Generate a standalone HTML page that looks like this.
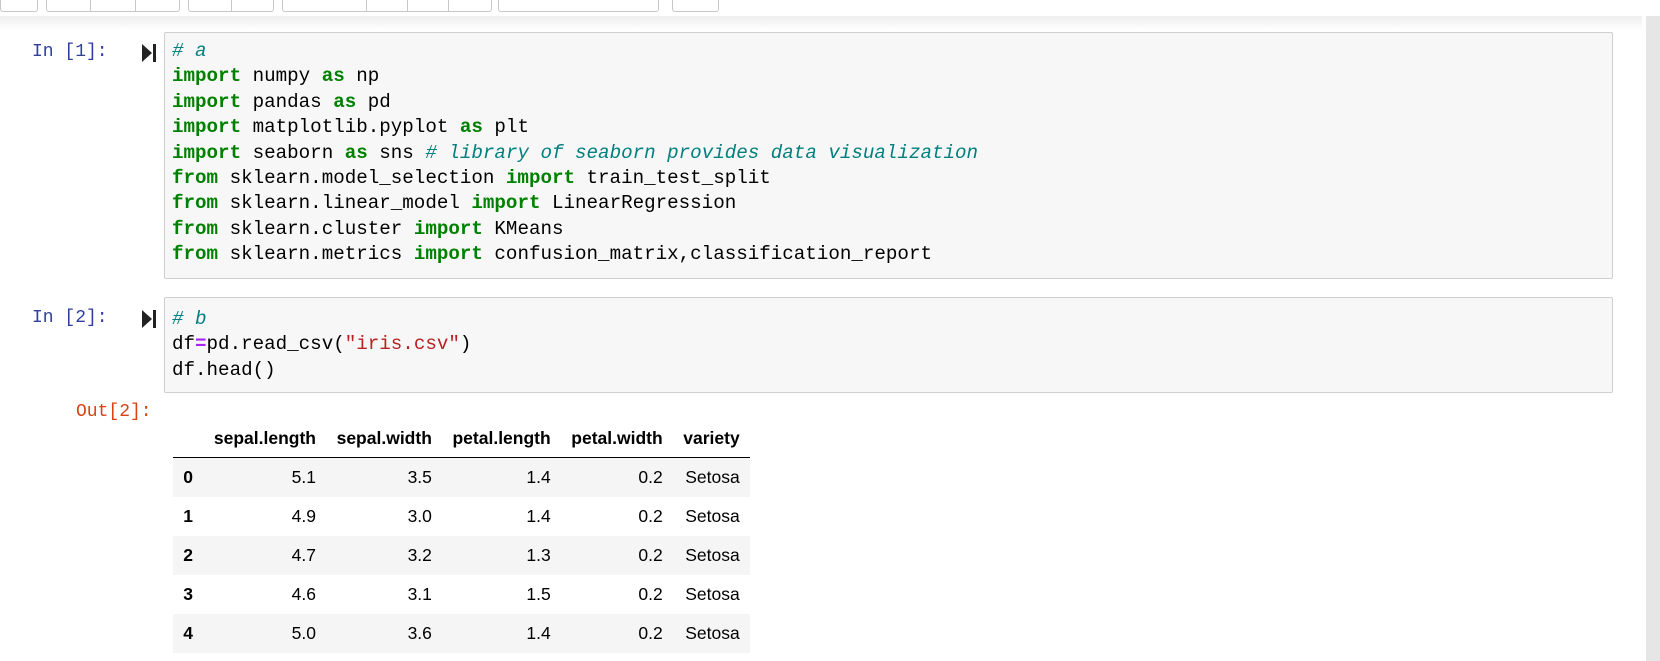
<!DOCTYPE html>
<html><head><style>
body{margin:0;width:1660px;height:661px;overflow:hidden;background:#fff;position:relative;font-family:"Liberation Sans",Arial,sans-serif}
.tb{position:absolute;top:-2px;height:14px;border:1px solid #c8c8c8;border-top:none;border-radius:0 0 3px 3px;background:#fff;box-sizing:border-box}
.dv{position:absolute;top:-2px;width:1px;height:13px;background:#c8c8c8}
.shadow{position:absolute;top:16px;left:0;width:1642px;height:14px;background:linear-gradient(#eee,#fff)}
.scroll{position:absolute;left:1646px;top:16px;width:14px;height:645px;background:#e6e6e6}
.cell{position:absolute;left:164px;width:1449px;background:#f7f7f7;border:1px solid #cfcfcf;border-radius:2px;box-sizing:border-box}
pre{margin:0;position:absolute;left:7px;font-family:"Liberation Mono",monospace;font-size:19.2px;line-height:25.4px;color:#000}
.k{color:#008000;font-weight:bold}.c{color:#007f7f;font-style:italic}.s{color:#ba2121}.o{color:#aa22ff;font-weight:bold}
.lbl{position:absolute;font-family:"Liberation Mono",monospace;font-size:18px;color:#303f9f}
.run{position:absolute;left:141px;width:17px;height:22px}
table{position:absolute;left:173px;top:420px;border-collapse:collapse;font-size:17.5px;color:#000}
th{font-weight:bold;text-align:right;padding:0 10.3px;height:37px}
td{text-align:right;padding:0 10.3px;height:39px}
thead th{border-bottom:1.5px solid #000}
tbody tr:nth-child(odd){background:#f5f5f5}
tbody th{text-align:left}
</style></head><body>
<div class="tb" style="left:0;width:38px"></div>
<div class="tb" style="left:46px;width:134px"></div><div class="dv" style="left:90px"></div><div class="dv" style="left:135px"></div>
<div class="tb" style="left:188px;width:86px"></div><div class="dv" style="left:231px"></div>
<div class="tb" style="left:282px;width:210px"></div><div class="dv" style="left:366px"></div><div class="dv" style="left:407px"></div><div class="dv" style="left:448px"></div>
<div class="tb" style="left:498px;width:161px"></div>
<div class="tb" style="left:672px;width:47px"></div>
<div class="shadow"></div>
<div class="scroll"></div>

<div class="lbl" style="left:32px;top:42px">In [1]:</div>
<svg class="run" style="top:42px" viewBox="0 0 17 22"><path d="M1 2L11 11L1 20Z" fill="#222"/><rect x="12" y="2" width="3" height="18" fill="#222"/></svg>
<div class="cell" style="top:32px;height:247px">
<pre style="top:6px"><span class="c"># a</span>
<span class="k">import</span> numpy <span class="k">as</span> np
<span class="k">import</span> pandas <span class="k">as</span> pd
<span class="k">import</span> matplotlib.pyplot <span class="k">as</span> plt
<span class="k">import</span> seaborn <span class="k">as</span> sns <span class="c"># library of seaborn provides data visualization</span>
<span class="k">from</span> sklearn.model_selection <span class="k">import</span> train_test_split
<span class="k">from</span> sklearn.linear_model <span class="k">import</span> LinearRegression
<span class="k">from</span> sklearn.cluster <span class="k">import</span> KMeans
<span class="k">from</span> sklearn.metrics <span class="k">import</span> confusion_matrix,classification_report</pre>
</div>

<div class="lbl" style="left:32px;top:308px">In [2]:</div>
<svg class="run" style="top:308px" viewBox="0 0 17 22"><path d="M1 2L11 11L1 20Z" fill="#222"/><rect x="12" y="2" width="3" height="18" fill="#222"/></svg>
<div class="cell" style="top:297px;height:96px">
<pre style="top:9px"><span class="c"># b</span>
df<span class="o">=</span>pd.read_csv(<span class="s">"iris.csv"</span>)
df.head()</pre>
</div>

<div class="lbl" style="left:76px;top:402px;color:#d84315">Out[2]:</div>
<table>
<thead><tr><th style="width:10px"></th><th>sepal.length</th><th>sepal.width</th><th>petal.length</th><th>petal.width</th><th>variety</th></tr></thead>
<tbody>
<tr><th>0</th><td>5.1</td><td>3.5</td><td>1.4</td><td>0.2</td><td>Setosa</td></tr>
<tr><th>1</th><td>4.9</td><td>3.0</td><td>1.4</td><td>0.2</td><td>Setosa</td></tr>
<tr><th>2</th><td>4.7</td><td>3.2</td><td>1.3</td><td>0.2</td><td>Setosa</td></tr>
<tr><th>3</th><td>4.6</td><td>3.1</td><td>1.5</td><td>0.2</td><td>Setosa</td></tr>
<tr><th>4</th><td>5.0</td><td>3.6</td><td>1.4</td><td>0.2</td><td>Setosa</td></tr>
</tbody></table>
</body></html>
